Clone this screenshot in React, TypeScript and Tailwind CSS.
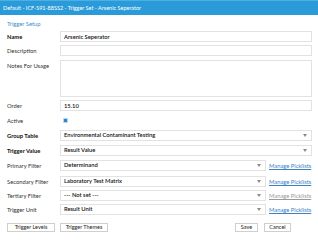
const font = "font-[family-name:Lato,'Open_Sans',sans-serif]"

function Arrow() {
  return (
    <svg width="4" height="3" viewBox="0 0 4 3" className="shrink-0">
      <path d="M0 0 L4 0 L2 3 Z" fill="#8a8a8a" />
    </svg>
  )
}

function Label({ text, bold }: { text: string; bold?: boolean }) {
  return (
    <div className={`w-[53px] shrink-0 whitespace-nowrap text-[5.8px] leading-[11px] ${bold ? "font-bold text-[#111]" : "text-[#333]"}`}>
      {text}
    </div>
  )
}

function TextRow({ label, value, bold, mt, h = 11 }: { label: string; value?: string; bold?: boolean; mt: string; h?: number }) {
  return (
    <div className={`flex ${mt}`}>
      <Label text={label} bold={bold} />
      <div
        className="flex-1 border border-[#e2e2e2] bg-white px-[3px] text-[5.8px] font-semibold leading-[9px] text-[#111]"
        style={{ height: h }}
      >
        {value}
      </div>
    </div>
  )
}

function SelectRow({ label, value, bold, mt, link }: { label: string; value: string; bold?: boolean; mt: string; link?: "on" | "off" }) {
  return (
    <div className={`flex ${mt}`}>
      <Label text={label} bold={bold} />
      <div className="flex h-[11px] flex-1 items-center justify-between border border-[#e2e2e2] bg-white pl-[3px] pr-[4px] text-[5.8px] font-semibold text-[#111]">
        <span className="whitespace-nowrap">{value}</span>
        <Arrow />
      </div>
      {link && (
        <div
          className={`ml-[3px] w-[43px] shrink-0 whitespace-nowrap text-[5.8px] leading-[11px] underline ${link === "on" ? "text-[#3b82c4]" : "text-[#9a9a9a]"}`}
        >
          Manage Picklists
        </div>
      )}
    </div>
  )
}

function Btn({ text, w }: { text: string; w: string }) {
  return (
    <div className={`flex h-[9px] ${w} items-center justify-center whitespace-nowrap border border-[#cfcfcf] bg-white text-[5.5px] text-[#222]`}>
      {text}
    </div>
  )
}

export default function App() {
  return (
    <div className={`h-[240px] w-[318px] overflow-hidden bg-white ${font}`}>
      <div className="flex h-[15px] items-center border-t border-[#4cb0e6] bg-[#2a9bd8] pl-[3px] text-[5.5px] text-white">
        Default - ICF-S91-88SS2 - Trigger Set - Arsenic Seperator
      </div>
      <div className="px-[7px] pr-[6px]">
        <div className="mt-[5px] text-[5.8px] leading-[8px] text-[#3c8fcf]">Trigger Setup</div>
        <TextRow label="Name" value="Arsenic Seperator" bold mt="mt-[3px]" />
        <TextRow label="Description" mt="mt-[3px]" />
        <TextRow label="Notes For Usage" mt="mt-[4px]" h={37} />
        <TextRow label="Order" value="15.10" mt="mt-[3px]" />
        <div className="mt-[5px] flex h-[8px] items-center">
          <Label text="Active" />
          <div className="ml-[3px] flex h-[5px] w-[5px] items-center justify-center border border-[#b9d8f0]">
            <div className="h-[3px] w-[3px] bg-[#2a86d0]" />
          </div>
        </div>
        <SelectRow label="Group Table" value="Environmental Contaminant Testing" bold mt="mt-[6px]" />
        <SelectRow label="Trigger Value" value="Result Value" bold mt="mt-[4px]" />
        <SelectRow label="Primary Filter" value="Determinand" mt="mt-[4px]" link="on" />
        <SelectRow label="Secondary Filter" value="Laboratory Test Matrix" mt="mt-[5px]" link="on" />
        <SelectRow label="Tertiary Filter" value="--- Not set ---" mt="mt-[3px]" link="off" />
        <SelectRow label="Trigger Unit" value="Result Unit" mt="mt-[3px]" link="on" />
        <div className="mt-[8px] flex items-center">
          <Btn text="Trigger Levels" w="w-[48px]" />
          <div className="ml-[5px]">
            <Btn text="Trigger Themes" w="w-[48px]" />
          </div>
          <div className="ml-auto mr-[21px] flex gap-[6px]">
            <Btn text="Save" w="w-[23px]" />
            <Btn text="Cancel" w="w-[27px]" />
          </div>
        </div>
      </div>
    </div>
  )
}
